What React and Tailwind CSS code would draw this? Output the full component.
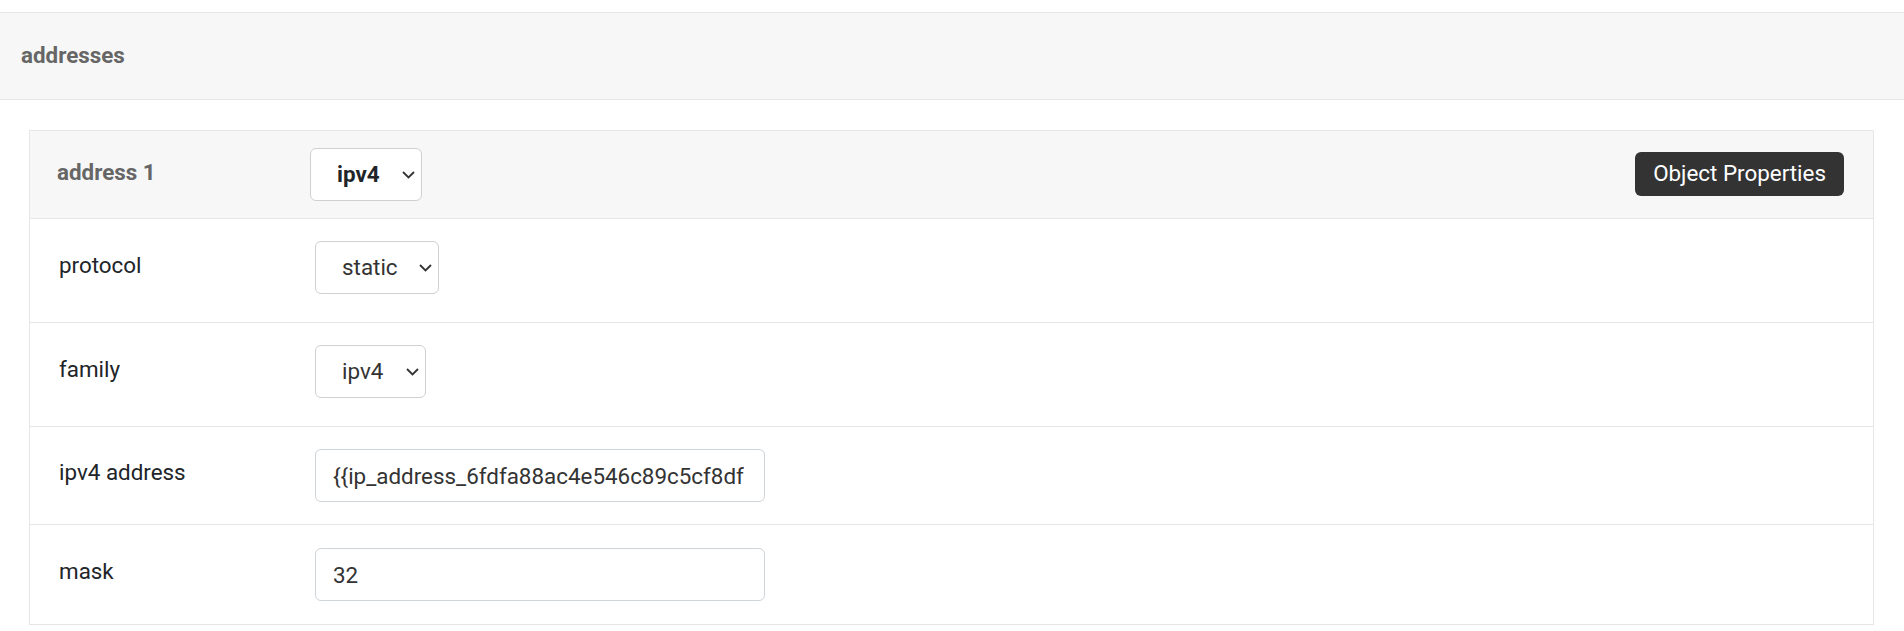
import React from "react";

function Chevron() {
  return (
    <svg width="13" height="8" viewBox="0 0 13 8" className="shrink-0">
      <path d="M1 1 L6.5 6.5 L12 1" fill="none" stroke="#333" strokeWidth="1.8" />
    </svg>
  );
}

function SelectBox({ value, bold, width }) {
  return (
    <div
      className={`flex h-[53px] items-center justify-between rounded-[6px] border border-[#d0d0d0] bg-white pl-[26px] pr-[6px] text-[22.4px] ${
        bold ? "font-bold text-[#212529]" : "text-[#333]"
      }`}
      style={{ width }}
    >
      <span className="leading-[33px]">{value}</span>
      <Chevron />
    </div>
  );
}

function TextBox({ value }) {
  return (
    <input
      readOnly
      value={value}
      className="h-[53px] w-[450px] rounded-[6px] border border-[#cfd4d9] bg-white pl-[17px] pr-[20px] text-[22.4px] text-[#333] outline-none"
    />
  );
}

function Row({ label, children, pt, pb, mt, last }) {
  return (
    <div className={`flex items-start pl-[29px] ${pt} ${pb} ${last ? "" : "border-b border-[#e6e6e6]"}`}>
      <div className={`w-[256px] text-[22.4px] leading-[33px] text-[#212529] ${mt}`}>{label}</div>
      {children}
    </div>
  );
}

export default function App() {
  return (
    <div className="min-h-[631px] bg-white pt-[12px] font-['Roboto',sans-serif]">
      <div className="h-[88px] border-y border-[#e6e6e6] bg-[#f7f7f7] pl-[21px] pt-[26px] text-[22.4px] font-bold leading-[33px] text-[#666]">
        addresses
      </div>
      <div className="ml-[29px] mr-[30px] mt-[30px] border border-[#e6e6e6]">
        <div className="flex h-[88px] items-center border-b border-[#e6e6e6] bg-[#f7f7f7] pl-[27px] pr-[29px]">
          <div className="mb-[4px] w-[253px] text-[22.4px] font-bold leading-[33px] text-[#666]">address 1</div>
          <SelectBox value="ipv4" bold width={112} />
          <div className="flex-1" />
          <button className="mb-[2px] h-[44px] rounded-[6px] bg-[#333333] px-[18px] text-[22.4px] leading-[33px] text-white">
            Object Properties
          </button>
        </div>
        <Row label="protocol" pt="pt-[22px]" pb="pb-[28px]" mt="mt-[8px]">
          <SelectBox value="static" width={124} />
        </Row>
        <Row label="family" pt="pt-[22px]" pb="pb-[28px]" mt="mt-[8px]">
          <SelectBox value="ipv4" width={111} />
        </Row>
        <Row label="ipv4 address" pt="pt-[22px]" pb="pb-[22px]" mt="mt-[7px]">
          <TextBox value="{{ip_address_6fdfa88ac4e546c89c5cf8df}}" />
        </Row>
        <Row label="mask" pt="pt-[23px]" pb="pb-[23px]" mt="mt-[7px]" last>
          <TextBox value="32" />
        </Row>
      </div>
    </div>
  );
}
